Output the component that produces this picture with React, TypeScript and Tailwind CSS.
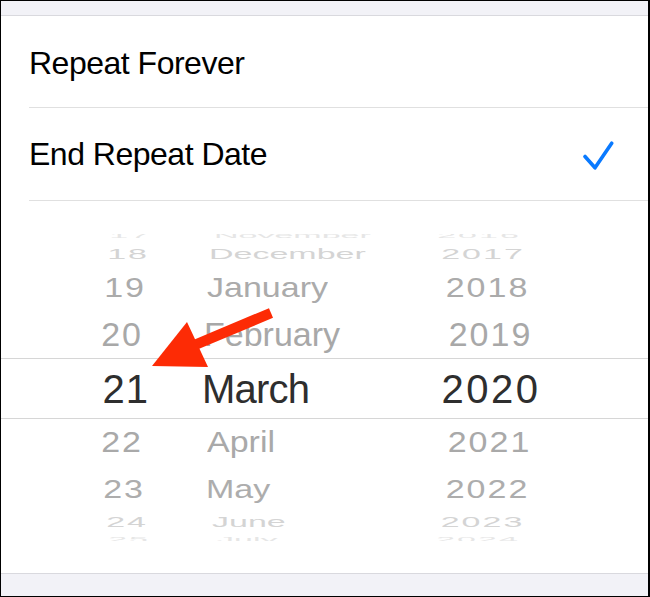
import React from "react";

type Row = {
  d: string;
  m: string;
  y: string;
  h: string;
  scale: string;
  color: string;
  dayPr: string;
  monthPl: string;
  yearPr: string;
  selected?: boolean;
};

const rows: Row[] = [
  { d: "17", m: "November", y: "2016", h: "h-[16px] -mt-[6px]", scale: "scale-y-[0.2]", color: "text-[#e6e6e6]", dayPr: "pr-[0px]", monthPl: "pl-[63px]", yearPr: "pr-[24px]" },
  { d: "18", m: "December", y: "2017", h: "h-[20px]", scale: "scale-y-[0.45]", color: "text-[#d4d4d4]", dayPr: "pr-[2px]", monthPl: "pl-[58px]", yearPr: "pr-[16px]" },
  { d: "19", m: "January", y: "2018", h: "h-[46px]", scale: "scale-y-[0.82]", color: "text-[#ababab]", dayPr: "pr-[5px]", monthPl: "pl-[56px]", yearPr: "pr-[7px]" },
  { d: "20", m: "February", y: "2019", h: "h-[48px]", scale: "scale-y-[1]", color: "text-[#a8a8a8]", dayPr: "pr-[8px]", monthPl: "pl-[53px]", yearPr: "pr-[1px]" },
  { d: "21", m: "March", y: "2020", h: "h-[61px] border-y border-[#d6d6d6]", scale: "scale-y-[1]", color: "text-[#2e2e2e]", dayPr: "pr-[2px]", monthPl: "pl-[51px]", yearPr: "pr-[0px]", selected: true },
  { d: "22", m: "April", y: "2021", h: "h-[46px]", scale: "scale-y-[0.87]", color: "text-[#a9a9a9]", dayPr: "pr-[8px]", monthPl: "pl-[56px]", yearPr: "pr-[3px]" },
  { d: "23", m: "May", y: "2022", h: "h-[48px]", scale: "scale-y-[0.75]", color: "text-[#adadad]", dayPr: "pr-[6px]", monthPl: "pl-[55px]", yearPr: "pr-[7px]" },
  { d: "24", m: "June", y: "2023", h: "h-[18px]", scale: "scale-y-[0.45]", color: "text-[#d4d4d4]", dayPr: "pr-[3px]", monthPl: "pl-[61px]", yearPr: "pr-[17px]" },
  { d: "25", m: "July", y: "2024", h: "h-[16px]", scale: "scale-y-[0.22]", color: "text-[#e6e6e6]", dayPr: "pr-[1px]", monthPl: "pl-[66px]", yearPr: "pr-[26px]" },
];

function PickerRow({ r }: { r: Row }) {
  const size = r.selected ? "text-[40px]" : "text-[34px]";
  return (
    <div className={`flex shrink-0 items-center ${r.h} ${r.color} ${size} leading-none`}>
      <div className={`w-[150px] text-right ${r.dayPr}`}>
        <span className={`inline-block ${r.scale} ${r.selected ? "tracking-[1px]" : "tracking-[2px]"}`}>{r.d}</span>
      </div>
      <div className={`w-[250px] ${r.monthPl}`}>
        <span className={`inline-block whitespace-nowrap ${r.scale} ${r.selected ? "tracking-[-0.8px]" : ""}`}>{r.m}</span>
      </div>
      <div className={`w-[180px] text-center ${r.yearPr}`}>
        <span className={`inline-block ${r.scale} ${r.selected ? "tracking-[2.5px]" : "tracking-[2px]"}`}>{r.y}</span>
      </div>
    </div>
  );
}

export default function App() {
  return (
    <div className="relative w-[650px] h-[597px] overflow-hidden border-t border-l border-b border-r-2 border-black bg-white font-['Liberation_Sans',Arial,sans-serif] text-black">
      <div className="h-[15px] bg-[#f2f2f7] border-b border-[#d9d9de]" />

      <div className="h-[92px] pl-[28px]">
        <div className="h-full flex items-center pt-[2px] border-b border-[#e0e0e0] text-[32px] tracking-[-0.5px] leading-none">
          Repeat Forever
        </div>
      </div>

      <div className="h-[93px] pl-[28px]">
        <div className="h-full flex items-center justify-between border-b border-[#e0e0e0] text-[32px] tracking-[-0.5px] leading-none">
          <span>End Repeat Date</span>
          <svg width="34" height="32" viewBox="0 0 34 32" className="mr-[33px]" fill="none">
            <path d="M4 18.5 L14 29.8 L30.7 5.2" stroke="#0a7aff" strokeWidth="3.6" strokeLinecap="round" strokeLinejoin="round" />
          </svg>
        </div>
      </div>

      <div className="h-[373px] pt-[33px] border-b border-[#d9d9de]">
        <div className="h-[307px] overflow-hidden flex flex-col">
          {rows.map((r) => (
            <PickerRow key={r.d} r={r} />
          ))}
        </div>
      </div>

      <div className="h-[22px] bg-[#f2f2f7]" />

      <svg
        className="absolute left-[-1px] top-[-1px] pointer-events-none"
        width="650"
        height="597"
        viewBox="0 0 650 597"
      >
        <line x1="271" y1="313" x2="190" y2="347" stroke="#fd2b05" strokeWidth="10.5" />
        <polygon points="187,322 152,366 208,367" fill="#fd2b05" />
      </svg>
    </div>
  );
}
